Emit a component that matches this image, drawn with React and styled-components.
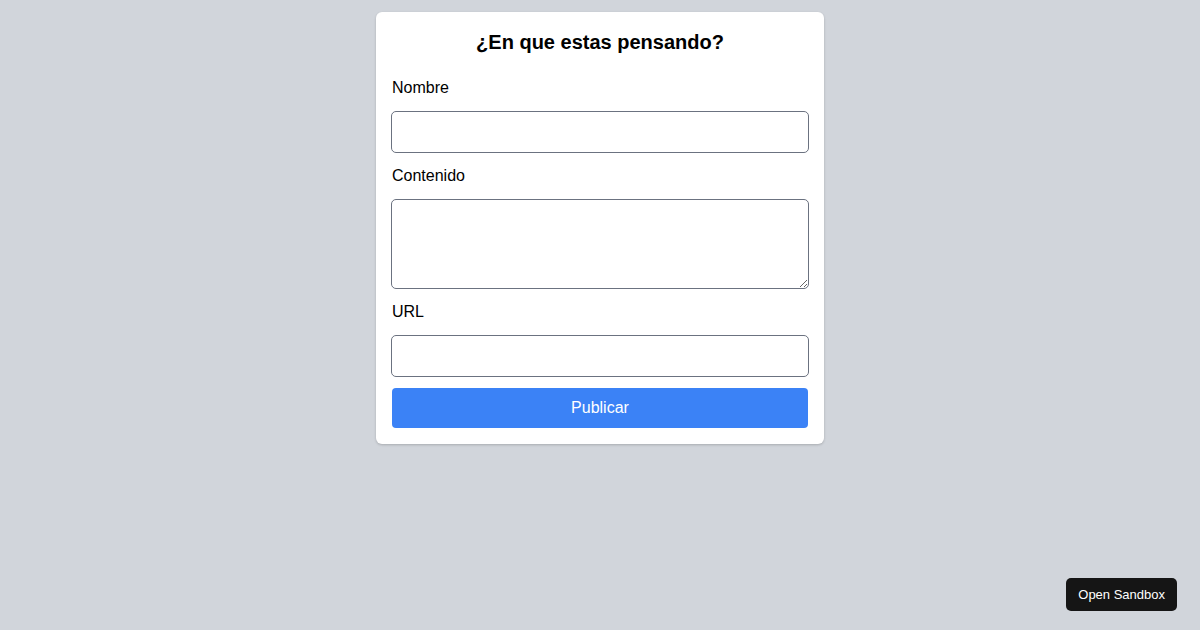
import React from 'react';
import styled, { createGlobalStyle } from 'styled-components';

const GlobalStyle = createGlobalStyle`
  html, body {
    margin: 0;
    padding: 0;
    background: #d1d5db;
    font-family: "Liberation Sans", Arial, sans-serif;
  }
  * { box-sizing: border-box; }
`;

const Page = styled.div`
  min-height: 630px;
  display: flex;
  justify-content: center;
  align-items: flex-start;
  padding-top: 12px;
`;

const Card = styled.form`
  width: 448px;
  background: #ffffff;
  border-radius: 6px;
  box-shadow: 0 1px 3px rgba(0, 0, 0, 0.12), 0 1px 2px rgba(0, 0, 0, 0.08);
  padding: 16px;
  display: flex;
  flex-direction: column;
`;

const Title = styled.h2`
  margin: 0 0 19px;
  font-size: 20px;
  line-height: 28px;
  font-weight: 700;
  text-align: center;
  color: #000;
`;

const Label = styled.label`
  display: block;
  font-size: 16px;
  line-height: 24px;
  color: #000;
  margin: 1px 0 11px;
`;

const Field = styled.input`
  display: block;
  width: calc(100% + 2px);
  margin: 0 -1px 10px;
  height: 42px;
  border: 1px solid #6b7280;
  border-radius: 5px;
  background: #fff;
  padding: 8px 12px;
  font: inherit;
`;

const Area = styled.textarea`
  display: block;
  width: calc(100% + 2px);
  margin: 0 -1px 10px;
  height: 90px;
  border: 1px solid #6b7280;
  border-radius: 5px;
  background: #fff;
  padding: 8px 12px;
  font: inherit;
  resize: vertical;
`;

const Submit = styled.button`
  margin-top: 1px;
  height: 40px;
  width: 100%;
  border: none;
  border-radius: 4px;
  background: #3b82f6;
  color: #fff;
  font-family: inherit;
  font-size: 16px;
  cursor: pointer;
`;

const SandboxButton = styled.button`
  position: fixed;
  right: 23px;
  bottom: 19px;
  height: 33px;
  padding: 0 12px;
  border: none;
  border-radius: 5px;
  background: #151515;
  color: #fff;
  font-family: "Liberation Sans", Arial, sans-serif;
  font-size: 13px;
`;

export default function App() {
  return (
    <>
      <GlobalStyle />
      <Page>
        <Card onSubmit={(e) => e.preventDefault()}>
          <Title>¿En que estas pensando?</Title>
          <Label htmlFor="nombre">Nombre</Label>
          <Field id="nombre" type="text" />
          <Label htmlFor="contenido">Contenido</Label>
          <Area id="contenido" />
          <Label htmlFor="url">URL</Label>
          <Field id="url" type="text" />
          <Submit type="submit">Publicar</Submit>
        </Card>
      </Page>
      <SandboxButton>Open Sandbox</SandboxButton>
    </>
  );
}
